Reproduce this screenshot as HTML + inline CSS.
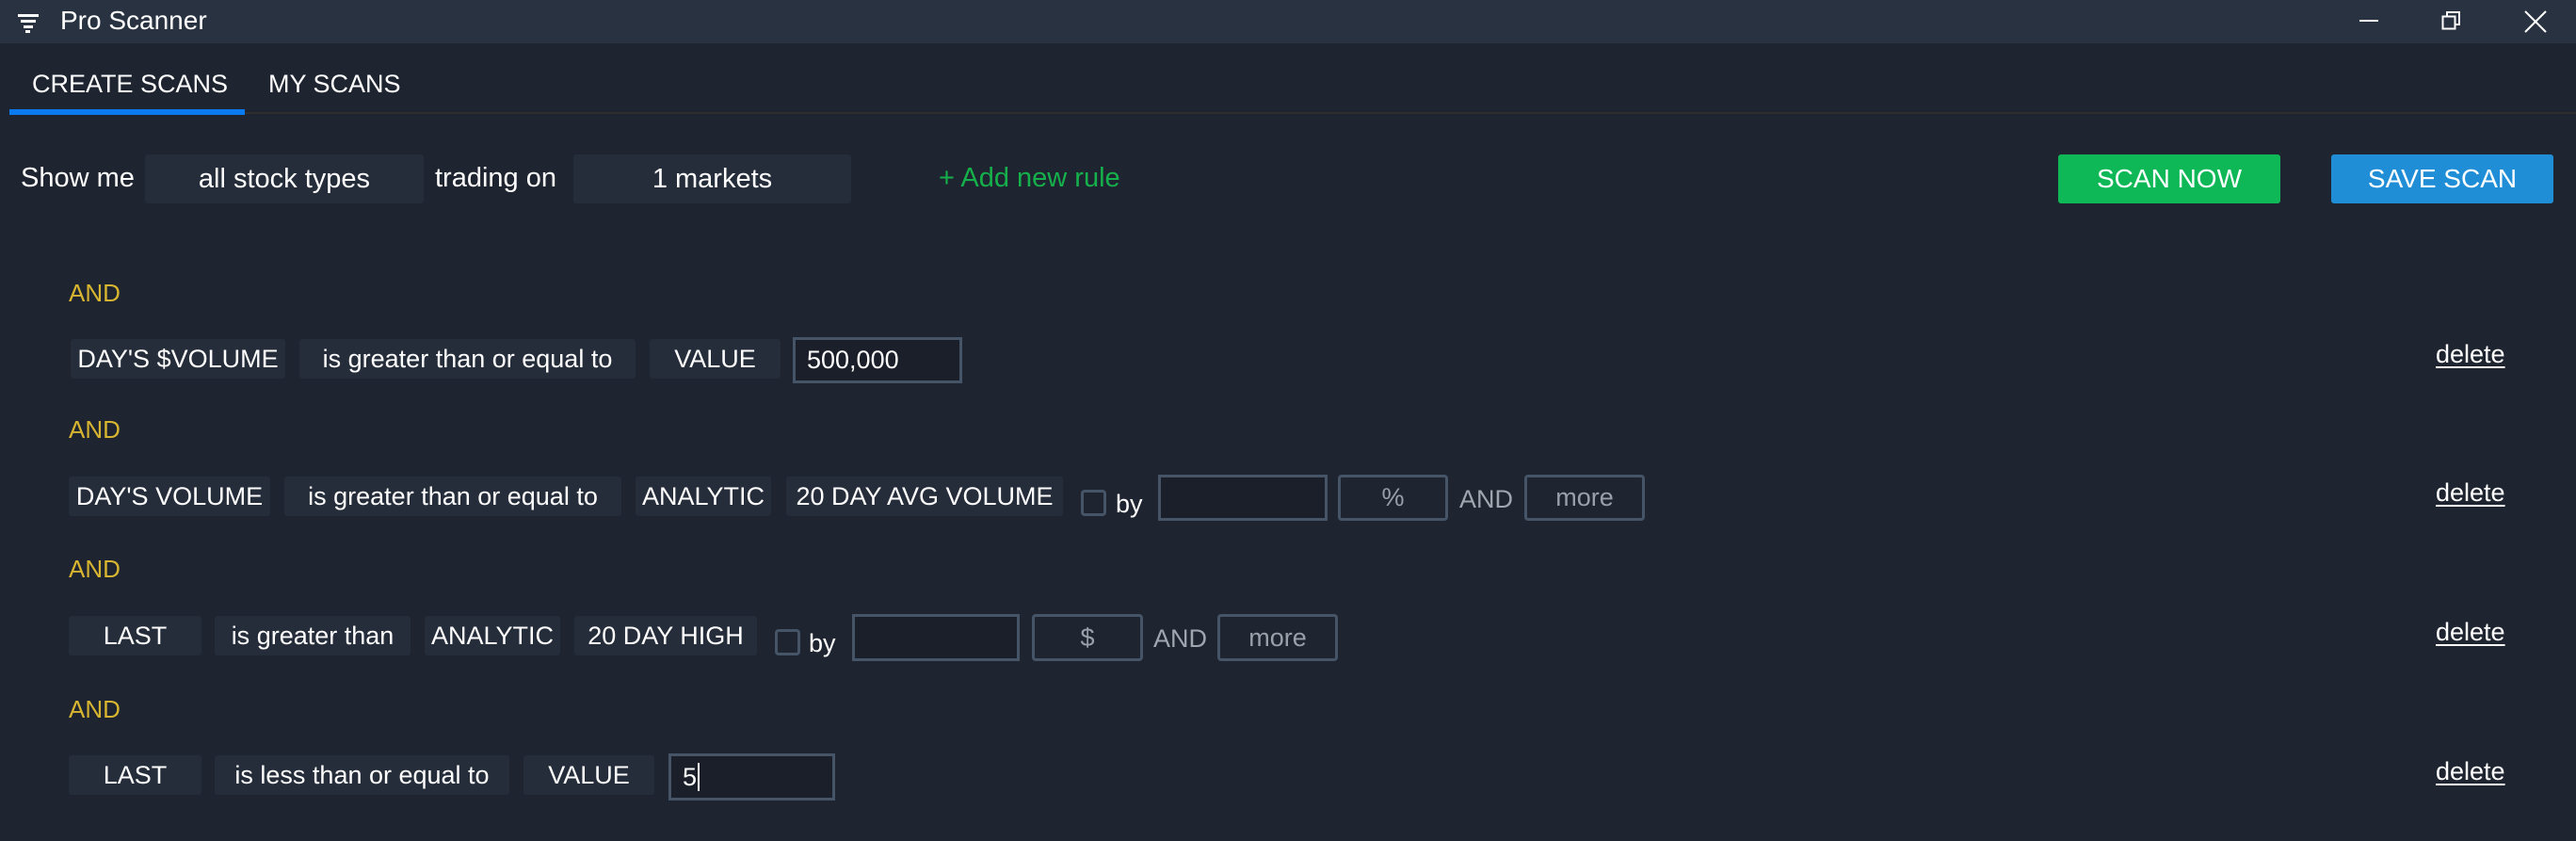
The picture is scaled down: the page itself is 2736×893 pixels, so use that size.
<!DOCTYPE html>
<html><head><meta charset="utf-8"><style>
*{margin:0;padding:0;box-sizing:border-box}
body{width:2736px;height:893px;background:#1f2530;font-family:"Liberation Sans",sans-serif;color:#fff;position:relative;overflow:hidden}
.a{position:absolute}
.t{position:absolute;font-size:28px;white-space:nowrap;line-height:1}
.b{position:absolute;background:#252d3a;border-radius:3px;font-size:27px;display:flex;align-items:center;justify-content:center;white-space:nowrap;color:#fff}
.in{position:absolute;background:#1a1f29;border:3px solid #465468;font-size:27px;display:flex;align-items:center;padding-left:12px;color:#fff}
.ob{position:absolute;border:3px solid #465468;border-radius:4px;font-size:27px;display:flex;align-items:center;justify-content:center;color:#9aa0aa}
.and{position:absolute;color:#d7b531;font-size:26px;left:73px}
.cb{position:absolute;width:27px;height:28px;border:3px solid #465468;border-radius:4px}
.del{position:absolute;left:2587px;font-size:27px;text-decoration:underline;text-underline-offset:4px}
.g{color:#a0a6b0}
</style></head><body>
<div class="a" style="left:0;top:0;width:2736px;height:46px;background:#283240"></div>
<svg class="a" style="left:19px;top:15px" width="24" height="20"><rect x="0" y="0" width="22" height="3" fill="#fff"/><rect x="3" y="6" width="16" height="3" fill="#fff"/><rect x="6" y="12" width="10" height="3" fill="#fff"/><rect x="8" y="17" width="5" height="3" fill="#fff"/></svg>
<div class="t" style="left:64px;top:8px;font-size:28px">Pro Scanner</div>
<div class="a" style="left:2506px;top:21px;width:20px;height:2px;background:#fff"></div>
<svg class="a" style="left:2593px;top:11px" width="22" height="22"><rect x="1.5" y="6.5" width="13" height="13" fill="none" stroke="#fff" stroke-width="2"/><path d="M6 6V2h13v13h-4" fill="none" stroke="#fff" stroke-width="2"/></svg>
<svg class="a" style="left:2681px;top:11px" width="24" height="24"><path d="M1 1L23 23M23 1L1 23" stroke="#fff" stroke-width="2"/></svg>

<div class="t" style="left:34px;top:76px;font-size:27px">CREATE SCANS</div>
<div class="t" style="left:285px;top:76px;font-size:27px">MY SCANS</div>
<div class="a" style="left:260px;top:119px;width:2476px;height:2px;background:#2d2d2d"></div>
<div class="a" style="left:10px;top:116px;width:250px;height:6px;background:#0a7af0"></div>

<div class="t" style="left:22px;top:175px;font-size:29px">Show me</div>
<div class="b" style="left:154px;top:164px;width:296px;height:52px;font-size:29px">all stock types</div>
<div class="t" style="left:462px;top:175px;font-size:29px">trading on</div>
<div class="b" style="left:609px;top:164px;width:295px;height:52px;font-size:29px">1 markets</div>
<div class="t" style="left:997px;top:175px;color:#15b04b;font-size:29px">+ Add new rule</div>
<div class="b" style="left:2186px;top:164px;width:236px;height:52px;background:#0fb856;font-size:28px">SCAN NOW</div>
<div class="b" style="left:2476px;top:164px;width:236px;height:52px;background:#208ed6;font-size:28px">SAVE SCAN</div>

<div class="and" style="top:296px">AND</div>
<div class="b" style="left:75px;top:360px;width:228px;height:42px">DAY'S $VOLUME</div>
<div class="b" style="left:318px;top:360px;width:357px;height:42px">is greater than or equal to</div>
<div class="b" style="left:690px;top:360px;width:139px;height:42px">VALUE</div>
<div class="in" style="left:842px;top:358px;width:180px;height:49px">500,000</div>
<div class="del" style="top:361px">delete</div>

<div class="and" style="top:441px">AND</div>
<div class="b" style="left:73px;top:506px;width:214px;height:42px">DAY'S VOLUME</div>
<div class="b" style="left:302px;top:506px;width:358px;height:42px">is greater than or equal to</div>
<div class="b" style="left:675px;top:506px;width:144px;height:42px">ANALYTIC</div>
<div class="b" style="left:835px;top:506px;width:294px;height:42px">20 DAY AVG VOLUME</div>
<div class="cb" style="left:1148px;top:520px"></div>
<div class="t" style="left:1185px;top:522px;font-size:27px">by</div>
<div class="in" style="left:1230px;top:504px;width:180px;height:49px"></div>
<div class="ob" style="left:1421px;top:504px;width:117px;height:49px">%</div>
<div class="t g" style="left:1550px;top:517px;font-size:27px">AND</div>
<div class="ob" style="left:1619px;top:504px;width:128px;height:49px">more</div>
<div class="del" style="top:508px">delete</div>

<div class="and" style="top:589px">AND</div>
<div class="b" style="left:73px;top:654px;width:141px;height:42px">LAST</div>
<div class="b" style="left:228px;top:654px;width:208px;height:42px">is greater than</div>
<div class="b" style="left:451px;top:654px;width:144px;height:42px">ANALYTIC</div>
<div class="b" style="left:610px;top:654px;width:194px;height:42px">20 DAY HIGH</div>
<div class="cb" style="left:823px;top:668px"></div>
<div class="t" style="left:859px;top:670px;font-size:27px">by</div>
<div class="in" style="left:905px;top:652px;width:178px;height:50px"></div>
<div class="ob" style="left:1096px;top:652px;width:118px;height:50px">$</div>
<div class="t g" style="left:1225px;top:665px;font-size:27px">AND</div>
<div class="ob" style="left:1293px;top:652px;width:128px;height:50px">more</div>
<div class="del" style="top:656px">delete</div>

<div class="and" style="top:738px">AND</div>
<div class="b" style="left:73px;top:802px;width:141px;height:42px">LAST</div>
<div class="b" style="left:228px;top:802px;width:313px;height:42px">is less than or equal to</div>
<div class="b" style="left:556px;top:802px;width:139px;height:42px">VALUE</div>
<div class="in" style="left:710px;top:800px;width:177px;height:50px">5<span style="display:inline-block;width:2px;height:30px;background:#fff;margin-left:1px"></span></div>
<div class="del" style="top:804px">delete</div>
</body></html>
